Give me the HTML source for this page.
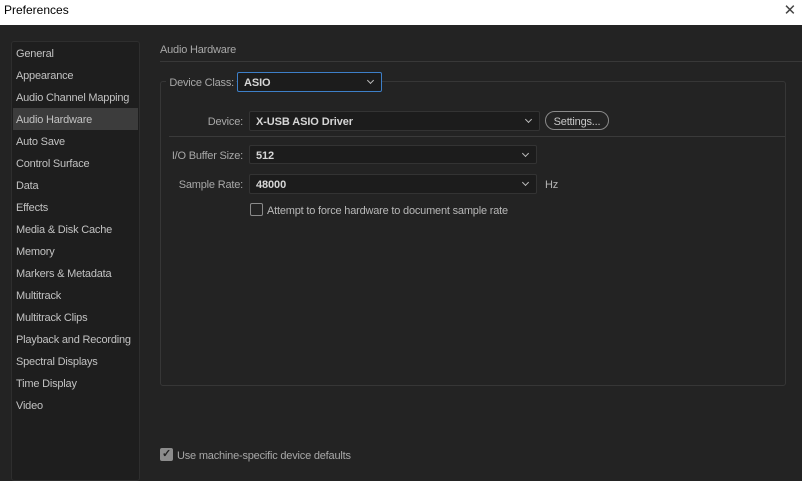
<!DOCTYPE html>
<html><head><style>
*{margin:0;padding:0;box-sizing:border-box}
body{width:802px;height:477px;background:#232323;font-family:"Liberation Sans",sans-serif;font-size:11px;color:#b4b4b4;position:relative;overflow:hidden;letter-spacing:-0.2px}
.abs{position:absolute}
#title{left:0;top:0;width:802px;height:25px;background:#fff;color:#000;font-size:12px;padding:3px 0 0 4px;letter-spacing:0}
#close{right:6px;top:1px;color:#444;font-size:15px;font-weight:100}
#side{left:11px;top:41px;width:129px;height:440px;background:#1e1e1e;border:1px solid #2e2e2e;border-radius:3px}
.it{position:absolute;left:1px;width:125px;height:22px;padding:6px 0 0 3px;color:#c2c2c2}
.sel{background:#3c3c3c}
.combo{position:absolute;background:#1c1c1c;border:1px solid #333;border-radius:2px;color:#d6d6d6;padding:4px 0 0 6px;font-weight:bold;letter-spacing:-0.1px}
.combo:after{content:"";position:absolute;right:8px;top:5px;width:4px;height:4px;border-right:1px solid #bbb;border-bottom:1px solid #bbb;transform:rotate(45deg)}
.lbl{position:absolute;text-align:right;color:#a8a8a8}
.cb{position:absolute;width:13px;height:13px;border:1px solid #8a8a8a;border-radius:2px}
</style></head><body>
<div id="title" class="abs">Preferences</div>
<div id="close" class="abs">✕</div>
<div id="side" class="abs">
<div class="it" style="top:0">General</div>
<div class="it" style="top:22px">Appearance</div>
<div class="it" style="top:44px">Audio Channel Mapping</div>
<div class="it sel" style="top:66px">Audio Hardware</div>
<div class="it" style="top:88px">Auto Save</div>
<div class="it" style="top:110px">Control Surface</div>
<div class="it" style="top:132px">Data</div>
<div class="it" style="top:154px">Effects</div>
<div class="it" style="top:176px">Media &amp; Disk Cache</div>
<div class="it" style="top:198px">Memory</div>
<div class="it" style="top:220px">Markers &amp; Metadata</div>
<div class="it" style="top:242px">Multitrack</div>
<div class="it" style="top:264px">Multitrack Clips</div>
<div class="it" style="top:286px">Playback and Recording</div>
<div class="it" style="top:308px">Spectral Displays</div>
<div class="it" style="top:330px">Time Display</div>
<div class="it" style="top:352px">Video</div>
</div>
<div class="abs" style="left:160px;top:44px;color:#a8a8a8">Audio Hardware</div>
<div class="abs" style="left:160px;top:61px;width:642px;height:1px;background:#383838"></div>
<div class="abs" style="left:160px;top:81px;width:626px;height:305px;border:1px solid #363636;border-radius:3px"></div>
<div class="abs" style="left:166px;top:74px;width:70px;height:14px;background:#232323"></div>
<div class="lbl" style="left:166px;top:77px;width:68px">Device Class:</div>
<div class="combo" style="left:237px;top:72px;width:145px;height:20px;border-color:#3d7fc8">ASIO</div>
<div class="lbl" style="left:170px;top:116px;width:73px">Device:</div>
<div class="combo" style="left:249px;top:111px;width:291px;height:20px">X-USB ASIO Driver</div>
<div class="abs" style="left:545px;top:111px;width:64px;height:19px;border:1px solid #8a8a8a;border-radius:10px;color:#c8c8c8;text-align:center;padding-top:4px">Settings...</div>
<div class="abs" style="left:169px;top:136px;width:616px;height:1px;background:#3a3a3a"></div>
<div class="lbl" style="left:165px;top:150px;width:78px">I/O Buffer Size:</div>
<div class="combo" style="left:249px;top:145px;width:288px;height:19px">512</div>
<div class="lbl" style="left:165px;top:179px;width:78px">Sample Rate:</div>
<div class="combo" style="left:249px;top:174px;width:288px;height:20px">48000</div>
<div class="abs" style="left:545px;top:179px;color:#b4b4b4">Hz</div>
<div class="cb" style="left:250px;top:203px"></div>
<div class="abs" style="left:267px;top:205px;color:#b8b8b8">Attempt to force hardware to document sample rate</div>
<div class="cb" style="left:160px;top:448px;background:#8c8c8c;border-color:#8c8c8c;color:#222;font-size:11px;line-height:11px;text-align:center;font-weight:bold">✓</div>
<div class="abs" style="left:177px;top:450px;color:#a8a8a8">Use machine-specific device defaults</div>
</body></html>
